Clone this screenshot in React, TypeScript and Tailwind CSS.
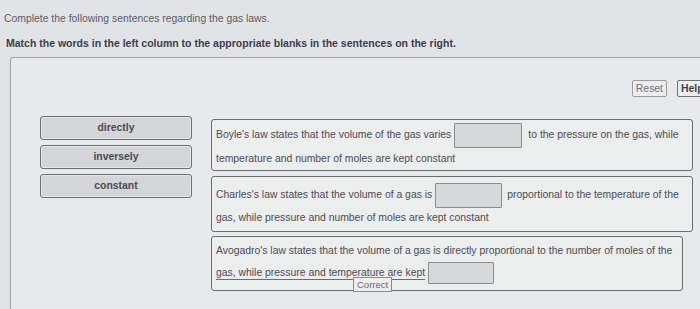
import React from "react";

const Blank = ({ w = 68, h = 25 }: { w?: number; h?: number }) => (
  <span
    className="inline-block border border-[#8a8c90] bg-[#d6d8da] rounded-[1px] align-middle mx-[3px]"
    style={{ width: w, height: h }}
  />
);

export default function App() {
  return (
    <div
      className="w-[700px] h-[309px] overflow-hidden bg-[#e2e3e7] text-[#4b4c56] relative"
      style={{ fontFamily: '"Liberation Sans", Arial, sans-serif' }}
    >
      <div className="pt-[12px] pl-[4px] text-[10.4px] leading-[14px] text-[#5a5b64]">
        Complete the following sentences regarding the gas laws.
      </div>
      <div className="pt-[10px] pl-[6px] text-[10.5px] leading-[14px] font-bold text-[#3c3d4c]">
        Match the words in the left column to the appropriate blanks in the sentences on the right.
      </div>
      <div className="mt-[7px] ml-[10px] h-[260px] border-t border-l border-[#a3a5a9] rounded-tl-[3px] bg-[#e8e9ea]">
        <div className="flex justify-end gap-[10px] pt-[22px] mr-[-12px]">
          <div className="h-[17px] px-[3px] border border-[#9a9ca0] rounded-[2px] bg-[#eceded] text-[10.4px] leading-[15px] text-[#707178]">
            Reset
          </div>
          <div className="h-[17px] w-[35px] pl-[3px] border border-[#6f7176] rounded-[2px] bg-[#eceded] text-[10.4px] leading-[15px] font-bold text-[#3e3f48]">
            Help
          </div>
        </div>
        <div className="flex mt-[19px]">
          <div className="ml-[29px] w-[152px] flex flex-col gap-[5px]">
            {["directly", "inversely", "constant"].map((w) => (
              <div
                key={w}
                className="h-[24px] border border-[#6c6e72] rounded-[3px] bg-[#d4d5d8] shadow-[inset_0_0_0_1px_#e6e7e9] flex items-center justify-center text-[10.4px] font-bold text-[#4a4b52] pb-[1px]"
              >
                {w}
              </div>
            ))}
          </div>
          <div className="ml-[19px] w-[482px] flex flex-col text-[10.4px] mt-[3px]">
            <div className="h-[52px] border border-[#6a6c70] rounded-[3px] bg-[#eceded] pl-[4px] pt-[2px] flex flex-col">
              <div className="flex items-center h-[26px]">
                <span>Boyle's law states that the volume of the gas varies</span>
                <Blank w={68} h={25} />
                <span className="ml-[3px]">to the pressure on the gas, while</span>
              </div>
              <div className="h-[22px] flex items-center">temperature and number of moles are kept constant</div>
            </div>
            <div className="mt-[5px] h-[56px] border border-[#6a6c70] rounded-[3px] bg-[#eceded] pl-[4px] pt-[5px] flex flex-col">
              <div className="flex items-center h-[26px]">
                <span>Charles's law states that the volume of a gas is</span>
                <Blank w={67} h={25} />
                <span className="ml-[2px]">proportional to the temperature of the</span>
              </div>
              <div className="h-[20px] flex items-center">gas, while pressure and number of moles are kept constant</div>
            </div>
            <div className="mt-[4px] h-[55px] w-[472px] border border-[#6a6c70] rounded-[3px] bg-[#eceded] pl-[4px] pt-[4px] flex flex-col relative">
              <div className="h-[20px] flex items-center">
                Avogadro's law states that the volume of a gas is directly proportional to the number of moles of the
              </div>
              <div className="flex items-center h-[24px]">
                <span className="border-b border-[#6a6c70] leading-[12px]">gas, while pressure and temperature are kept</span>
                <Blank w={66} h={22} />
              </div>
              <div className="absolute left-[141px] top-[40px] h-[15px] px-[3px] border border-[#8a8c90] bg-[#eeeeee] text-[9.5px] leading-[13px] text-[#6a6b72]">
                Correct
              </div>
            </div>
          </div>
        </div>
      </div>
    </div>
  );
}
